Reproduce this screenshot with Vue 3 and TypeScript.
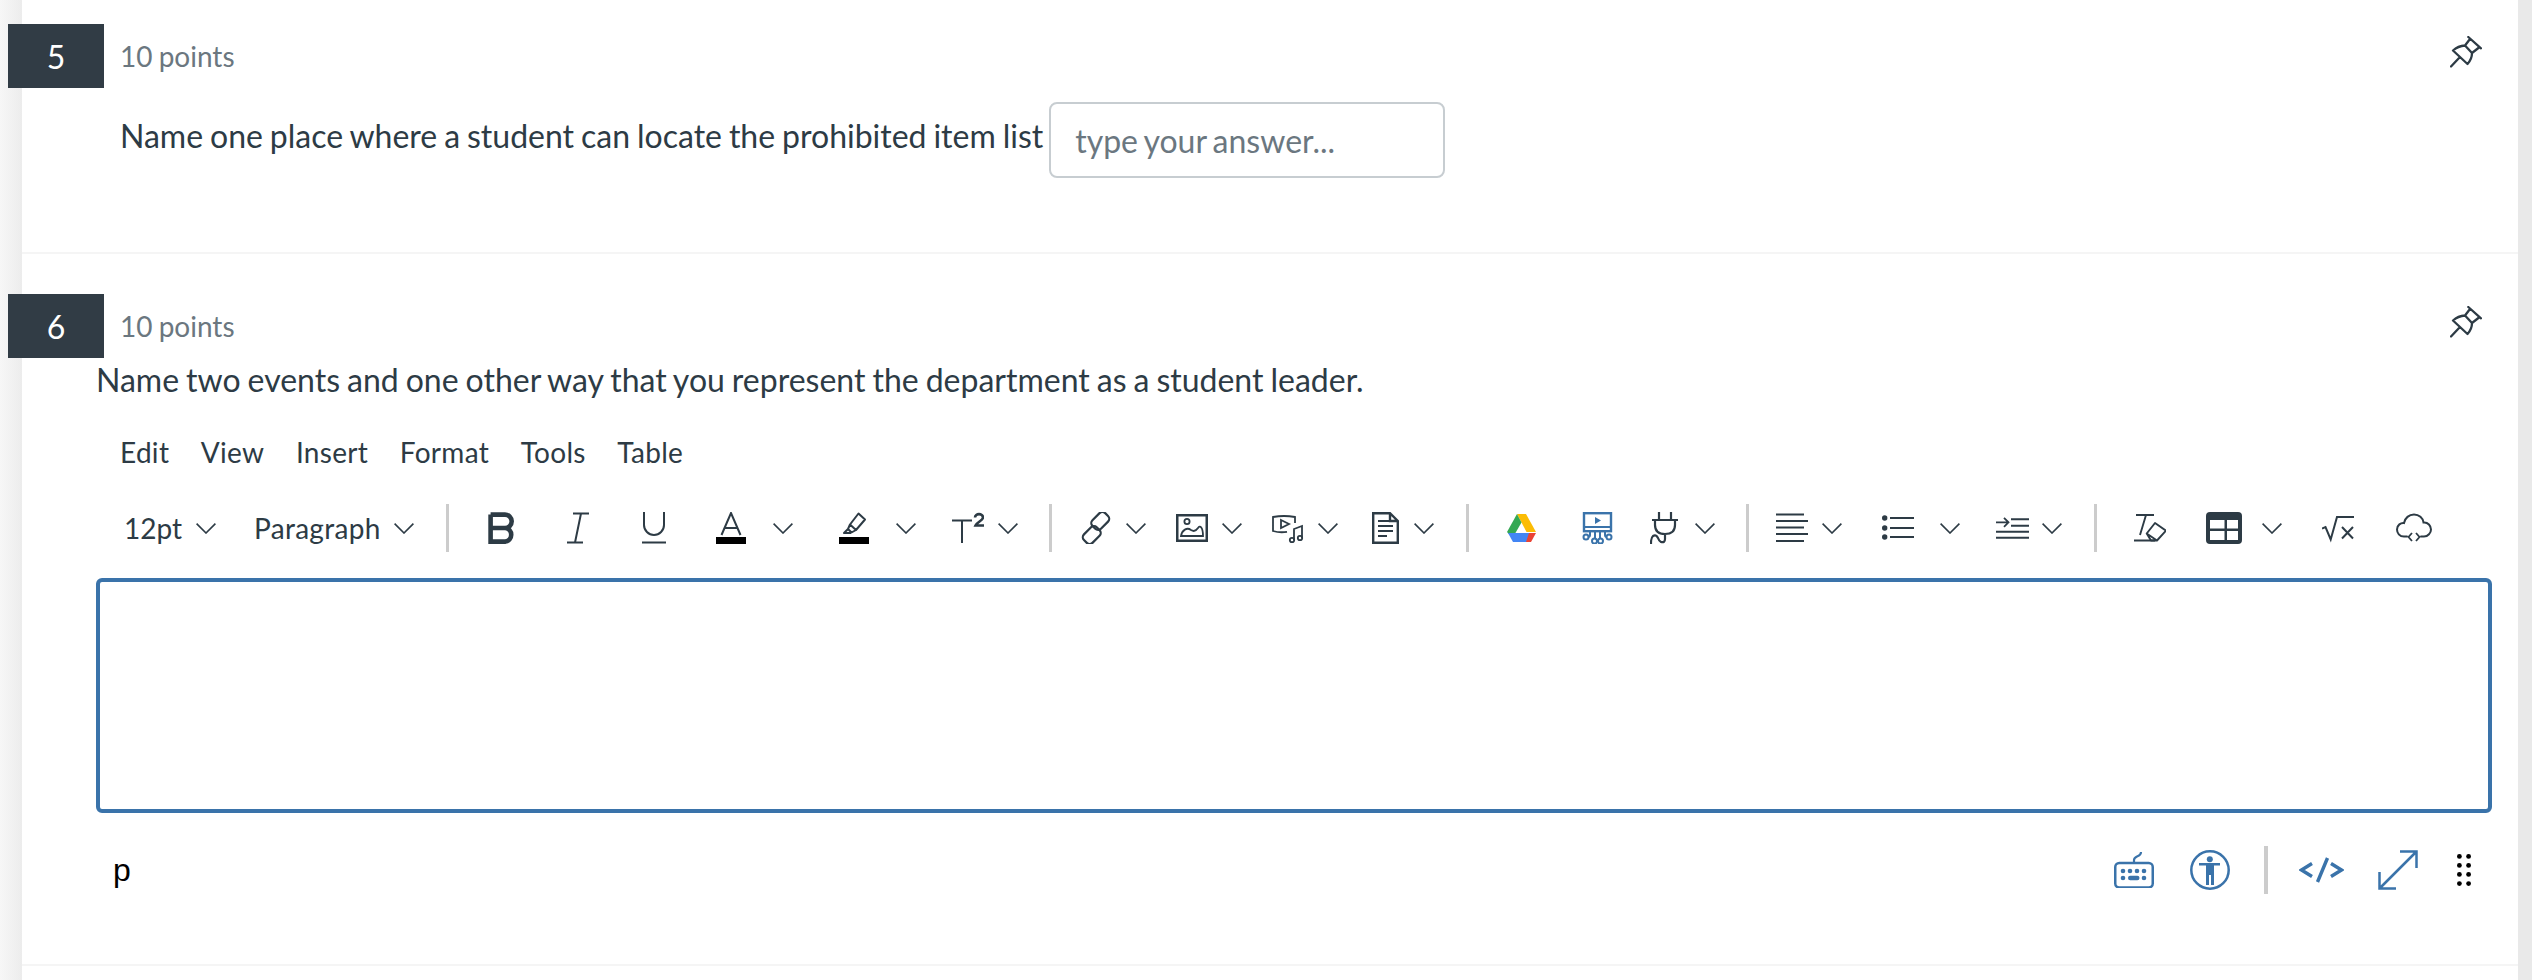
<script setup lang="ts">
interface Tool {
  kind: 'icon' | 'chev' | 'sep'
  gap: number
  w?: number
  body?: string
}
const C = '#2d3b45'
const B = '#3a73aa'
const st = (c: string, w: number) => `fill="none" stroke="${c}" stroke-width="${w}"`

const chev = (gap: number): Tool => ({ kind: 'chev', gap })
const sep = (gap: number): Tool => ({ kind: 'sep', gap })
const icon = (gap: number, w: number, body: string): Tool => ({ kind: 'icon', gap, w, body })

const tools: Tool[] = [
  icon(39, 27, `<path ${st(C, 4.6)} stroke-linejoin="miter" d="M2.6 2.6H17a6.6 6.6 0 0 1 0 13.4H2.6M17.5 16a6.9 6.9 0 0 1 0 13.6H2.6V2.6"/>`),
  icon(52, 22, `<path ${st(C, 2)} d="M6 1.5H22M0 30.5H16M14 1.5L8 30.5"/>`),
  icon(53, 24, `<path ${st(C, 2)} d="M2 0V13a10 10 0 0 0 20 0V0M0 30.5H24"/>`),
  icon(50, 30, `<path ${st(C, 2)} d="M5.5 23L15 1L24.5 23M9 16H21"/><rect y="25" width="30" height="7" fill="#000"/>`),
  chev(27),
  icon(46, 30, `<path ${st(C, 2)} stroke-linejoin="round" d="M19.5 1.5L26 7.5L17 18L11 12.5ZM11 12.5L9 17L12.5 20.5L17 18M9 17L5 21H12"/><rect y="25" width="30" height="7" fill="#000"/>`),
  chev(27),
  icon(36, 32, `<path ${st(C, 2)} d="M0 8.5H20M10 8.5V31"/><path ${st(C, 2.6)} d="M23 5.5C23 1 31 1 31 5.5C31 8.5 25 10 23.5 13.5H32"/>`),
  chev(14),
  sep(31),
  icon(28, 32, `<g ${st(C, 2.2)} transform="rotate(-45 16 16)"><rect x="15" y="8" width="18" height="12" rx="4"/><rect x="-1" y="12" width="18" height="12" rx="4"/></g>`),
  chev(14),
  icon(30, 32, `<rect x="1.25" y="3.25" width="29.5" height="25.5" ${st(C, 2.5)}/><circle cx="11" cy="9.5" r="2.6" ${st(C, 1.8)}/><path ${st(C, 1.8)} d="M5 24C6 18 11 15 15 18C18 20 20 19 22 16C24 13 27 15 27 24Z"/>`),
  chev(14),
  icon(30, 32, `<path ${st(C, 1.8)} d="M15 19.8Q8 21 1 19V5Q12 3 23 5V11M9 8L17 12L9 16Z"/><path ${st(C, 1.8)} d="M22 28V17L30 14V26"/><circle cx="20" cy="28" r="2.2" ${st(C, 1.8)}/><circle cx="28" cy="26" r="2.2" ${st(C, 1.8)}/>`),
  chev(14),
  icon(34, 27, `<path ${st(C, 2.4)} d="M1.2 1.2H18L25.8 9V30.8H1.2ZM18 1.2V9H25.8"/><path ${st(C, 2)} d="M6 9H18M6 14H21M6 19H21M6 24H15"/>`),
  chev(15),
  sep(32),
  icon(38, 29, `<path fill="#fbbc04" d="M10 2H19L29 20H19.5Z"/><path fill="#34a853" d="M10 2L14.5 10.5L5.5 26L0 20Z"/><path fill="#ea4335" d="M20 21H29L24 30H17Z"/><path fill="#4285f4" d="M1 21H22L19 30H6Z"/>`),
  icon(46, 31, `<rect x="2" y="1.2" width="27" height="18" ${st(B, 2.4)}/><path ${st(B, 2)} d="M2 15H29M8 19V23Q8 25 6 25M13 19V26M18 19V26M23 19V23Q23 25 25 25"/><path fill="${B}" d="M13 5L19 8.5L13 12Z"/><g ${st(B, 2)}><circle cx="4" cy="25" r="2.5"/><circle cx="27" cy="25" r="2.5"/><circle cx="12.5" cy="29" r="2.5"/><circle cx="18.5" cy="29" r="2.5"/></g>`),
  icon(37, 28, `<path ${st(C, 2.2)} d="M9 0V8M21 0V8M2 8H28M5 8V13Q5 22 15 22Q25 22 25 13V8M15 22V27Q15 31 11 30Q9 29 8 26Q6 22 3 24Q0.8 26 1 32"/>`),
  chev(17),
  sep(31),
  icon(27, 32, `<path ${st(C, 2)} d="M0 2.5H28M0 9H32M0 15.5H28M0 22H32M0 29H28"/>`),
  chev(14),
  icon(40, 32, `<g fill="${C}"><circle cx="2.7" cy="6" r="2.7"/><circle cx="2.7" cy="16" r="2.7"/><circle cx="2.7" cy="25" r="2.7"/></g><path ${st(C, 2)} d="M8 6H32M8 16H32M8 25H32"/>`),
  chev(26),
  icon(36, 33, `<path ${st(C, 2)} d="M15 7.3H33M15 13.7H33M0 19.7H33M0 25.7H33"/><path ${st(C, 1.8)} d="M0 10.3H12M8 5.8L12.5 10.3L8 14.8"/>`),
  chev(13),
  sep(32),
  icon(37, 32, `<path ${st(C, 1.9)} stroke-linejoin="round" d="M2 3H20M12 3L6 23M0 28.5H21"/><path ${st(C, 1.9)} stroke-linejoin="round" d="M21 11L32 18.7L23 28.5H17L12.7 21.5ZM12.7 21.5L23 28.5"/>`),
  icon(40, 36, `<rect width="36" height="32" rx="4" fill="${C}"/><g fill="#fff"><rect x="4" y="8" width="14.5" height="8.5"/><rect x="21" y="8" width="11" height="8.5"/><rect x="4" y="19" width="14.5" height="9"/><rect x="21" y="19" width="11" height="9"/></g>`),
  chev(20),
  icon(40, 32, `<path ${st(C, 2)} d="M0 16.5L3.5 15L8.7 27.5L15 5H32M20 15L31 26.5M31 15L20 26.5"/>`),
  icon(42, 36, `<path ${st(C, 2)} stroke-linecap="round" d="M11 24.5H8C3.5 24.5 1 21 1 17.5C1 13 5 10.5 8 11C9 6 13 2.5 18 2.5C23 2.5 27 6 27.5 10.5C32 10 35 14 35 17.5C35 21 32 24.5 28 24.5H25"/><path ${st(C, 1.8)} d="M16 21L12.5 25L16 29M20 21L23.5 25L20 29"/>`),
]

const menus: string[] = ['Edit', 'View', 'Insert', 'Format', 'Tools', 'Table']
</script>

<template>
  <div class="page">
    <div class="gutter-left"></div>
    <main class="content">
      <section class="question q5">
        <header class="head">
          <div class="badge">5</div>
          <span class="points">10 points</span>
          <svg class="pin" viewBox="0 0 32 32" width="32" height="32" fill="none" stroke="#2d3b45" stroke-width="2.3" stroke-linejoin="round" stroke-linecap="round">
            <path d="M18.3 1L31 12.3M20 3L15 9.5M29 11.5L22 17M15 9.5Q8 10 3 14.5L17.5 28Q22 23 22 17ZM15 9.5L22 17M9.5 21.5L1 30.5" />
          </svg>
        </header>
        <div class="answer-row">
          <span class="q-text">Name one place where a student can locate the prohibited item list</span>
          <input class="answer" type="text" placeholder="type your answer..." />
        </div>
      </section>

      <section class="question q6">
        <header class="head">
          <div class="badge">6</div>
          <span class="points">10 points</span>
          <svg class="pin" viewBox="0 0 32 32" width="32" height="32" fill="none" stroke="#2d3b45" stroke-width="2.3" stroke-linejoin="round" stroke-linecap="round">
            <path d="M18.3 1L31 12.3M20 3L15 9.5M29 11.5L22 17M15 9.5Q8 10 3 14.5L17.5 28Q22 23 22 17ZM15 9.5L22 17M9.5 21.5L1 30.5" />
          </svg>
        </header>
        <div class="body">
          <p class="q-line">Name two events and one other way that you represent the department as a student leader.</p>
          <nav class="menu">
            <span v-for="m in menus" :key="m">{{ m }}</span>
          </nav>
          <div class="toolbar">
            <span class="select size">12pt
              <svg class="chev" viewBox="0 0 20 11" width="20" height="11"><polyline points="0.6,0.6 10,10 19.4,0.6" /></svg>
            </span>
            <span class="select para">Paragraph
              <svg class="chev" viewBox="0 0 20 11" width="20" height="11"><polyline points="0.6,0.6 10,10 19.4,0.6" /></svg>
            </span>
            <i class="tsep first"></i>
            <template v-for="(t, i) in tools" :key="i">
              <i v-if="t.kind === 'sep'" class="tsep" :style="{ marginLeft: t.gap + 'px' }"></i>
              <svg v-else-if="t.kind === 'chev'" class="chev" viewBox="0 0 20 11" width="20" height="11" :style="{ marginLeft: t.gap + 'px' }"><polyline points="0.6,0.6 10,10 19.4,0.6" /></svg>
              <svg v-else :viewBox="`0 0 ${t.w} 32`" :width="t.w" height="32" :style="{ marginLeft: t.gap + 'px' }" v-html="t.body"></svg>
            </template>
          </div>
          <div class="editor"></div>
          <footer class="status">
            <span class="path">p</span>
            <div class="status-icons">
              <svg viewBox="0 0 40 36" width="40" height="36" fill="#3a73aa">
                <rect x="1.25" y="11" width="37.5" height="24.5" rx="4" fill="none" stroke="#3a73aa" stroke-width="2.5" />
                <path d="M20 10V8Q20 6 23 4.5Q27 3 27 0" fill="none" stroke="#3a73aa" stroke-width="2.2" />
                <circle cx="9" cy="19" r="2.3" /><circle cx="16" cy="19" r="2.3" /><circle cx="23" cy="19" r="2.3" /><circle cx="30" cy="19" r="2.3" />
                <circle cx="9" cy="26" r="2.3" /><rect x="14" y="23.7" width="11.5" height="4.6" rx="2.2" /><circle cx="30" cy="26" r="2.3" />
              </svg>
              <svg class="gap-a11y" viewBox="0 0 40 40" width="40" height="40" fill="#3a73aa">
                <circle cx="20" cy="20" r="18.7" fill="none" stroke="#3a73aa" stroke-width="2.5" />
                <circle cx="19.8" cy="9.3" r="3" />
                <rect x="9" y="13" width="21" height="2.5" />
                <path d="M16 14H24V35H21V25H19V35H16Z" />
              </svg>
              <i class="status-sep"></i>
              <svg class="gap-code" viewBox="0 0 45 26" width="45" height="26" fill="none" stroke="#3a73aa" stroke-width="3.4">
                <path d="M13 6.5L2.5 13L13 19.5M32 6.5L42.5 13L32 19.5M28.5 1L18.5 25" />
              </svg>
              <svg class="gap-expand" viewBox="0 0 40 40" width="40" height="40" fill="none" stroke="#3a73aa" stroke-width="2.5">
                <path d="M2 38L38 2M22 1.5H38.5V18M1.5 22V38.5H18" />
              </svg>
              <svg class="gap-dots" viewBox="0 0 14 32" width="14" height="32" fill="#000">
                <circle cx="2.4" cy="2.4" r="2.4" /><circle cx="11.6" cy="2.4" r="2.4" />
                <circle cx="2.4" cy="11.4" r="2.4" /><circle cx="11.6" cy="11.4" r="2.4" />
                <circle cx="2.4" cy="20.4" r="2.4" /><circle cx="11.6" cy="20.4" r="2.4" />
                <circle cx="2.4" cy="29.6" r="2.4" /><circle cx="11.6" cy="29.6" r="2.4" />
              </svg>
            </div>
          </footer>
        </div>
      </section>
    </main>
    <div class="gutter-right"></div>
  </div>
</template>

<style scoped>
.page {
  display: flex;
  height: 980px;
  overflow: hidden;
  background: #fff;
  color: #2d3b45;
  font-family: Lato, "Noto Sans", sans-serif;
}
.gutter-left {
  width: 22px;
  flex: none;
  background: linear-gradient(to right, #f7f7f7, #ececec);
}
.gutter-right {
  width: 14px;
  flex: none;
  background: #e9e9e9;
}
.content {
  flex: 1;
  min-width: 0;
}
.question {
  border-bottom: 2px solid #f5f5f5;
}
.q5 {
  padding: 24px 0 74px;
}
.q6 {
  padding: 40px 0 70px;
}
.head {
  display: flex;
  align-items: center;
  height: 64px;
}
.badge {
  width: 96px;
  height: 64px;
  margin-left: -14px;
  flex: none;
  background: #313c45;
  color: #fff;
  font-size: 32px;
  display: flex;
  align-items: center;
  justify-content: center;
  position: relative;
}
.points {
  margin-left: 16px;
  font-size: 28px;
  word-spacing: -1px;
  color: #6b7780;
}
.pin {
  margin-left: auto;
  margin-right: 36px;
  align-self: flex-start;
  margin-top: 12px;
}
.answer-row {
  display: flex;
  align-items: flex-start;
  margin: 14px 0 0 98px;
  gap: 6px;
}
.q-text {
  font-size: 32px;
  line-height: 68px;
  word-spacing: -1.25px;
}
.answer {
  width: 396px;
  height: 76px;
  box-sizing: border-box;
  border: 2px solid #c7cdd1;
  border-radius: 8px;
  padding: 0 24px;
  font: 32px Lato, sans-serif;
  word-spacing: -2px;
  outline: none;
  background: #fff;
}
.answer::placeholder {
  color: #6b7780;
  opacity: 1;
}
.body {
  margin: 0 26px 0 74px;
}
.q-line {
  margin: 0;
  font-size: 32px;
  line-height: 44px;
  word-spacing: -1.2px;
}
.menu {
  display: flex;
  gap: 31.6px;
  margin: 28px 0 0 24px;
  height: 44px;
  align-items: center;
  font-size: 28px;
  letter-spacing: 0.3px;
}
.toolbar {
  display: flex;
  align-items: center;
  height: 52px;
  margin-top: 28px;
}
.select {
  display: flex;
  align-items: center;
  justify-content: space-between;
  font-size: 28px;
  flex: none;
}
.size {
  width: 92px;
  margin-left: 28px;
}
.para {
  width: 160px;
  margin-left: 38px;
  letter-spacing: 0.3px;
}
.chev {
  flex: none;
}
.chev polyline {
  fill: none;
  stroke: #2d3b45;
  stroke-width: 1.6;
}
.toolbar > svg {
  flex: none;
}
.tsep {
  display: block;
  width: 3px;
  height: 48px;
  flex: none;
  background: #ccc;
}
.tsep.first {
  margin-left: 32px;
}
.editor {
  height: 235px;
  box-sizing: border-box;
  margin-top: 24px;
  border: 4px solid #3a73aa;
  border-radius: 6px;
}
.status {
  display: flex;
  align-items: center;
  justify-content: space-between;
  height: 48px;
  margin-top: 33px;
  padding: 0 21px 0 17px;
}
.path {
  font-family: "Liberation Sans", Arial, sans-serif;
  font-size: 32px;
  color: #000;
}
.status-icons {
  display: flex;
  align-items: center;
}
.gap-a11y {
  margin-left: 36px;
}
.status-sep {
  display: block;
  width: 4px;
  height: 48px;
  margin-left: 34px;
  background: #ccc;
}
.gap-code {
  margin-left: 31px;
}
.gap-expand {
  margin-left: 34px;
}
.gap-dots {
  margin-left: 39px;
}
</style>

<style>
html, body {
  margin: 0;
  overflow: hidden;
  background: #fff;
}
</style>
